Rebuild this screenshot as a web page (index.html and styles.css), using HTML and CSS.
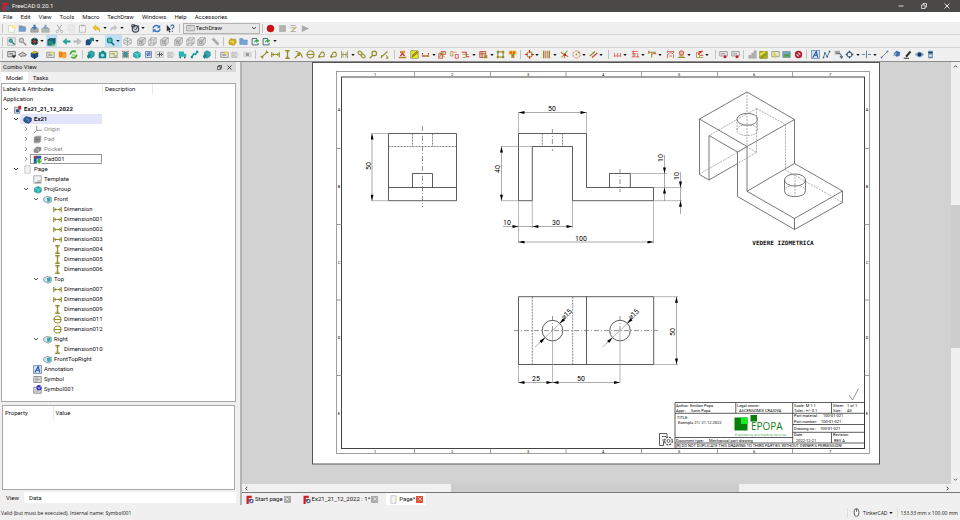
FILE: index.html
```html
<!DOCTYPE html>
<html lang="en">
<head>
  <meta charset="UTF-8">
  <meta name="viewport" content="width=device-width, initial-scale=1.0">
  <title>FreeCAD 0.20.1</title>
  <link rel="stylesheet" href="styles.css">
</head>
<body>
  <!-- Icon sprite, every icon is on a 12x12 grid -->
  <svg class="sprite" aria-hidden="true">
    <symbol id="logo" viewBox="0 0 12 12"><path d="M2 1h7v3H5v2h3v2H5v4H2z" fill="#d01f27"/><circle cx="8.500" cy="8" r="2.300" fill="none" stroke="#3d5f9c" stroke-width="1.600"/></symbol>
    <symbol id="new" viewBox="0 0 12 12"><path d="M2 2h8v9H2z" fill="#fbfbf5" stroke="#c9c9bd" stroke-width=".8"/><circle cx="8.500" cy="3.500" r="2.500" fill="#fdf07a"/></symbol>
    <symbol id="open" viewBox="0 0 12 12"><path d="M1 2h4l1 1h4v7H1z" fill="#8a8f98"/><path d="M2 5h9l-1 5H1z" fill="#6da0d8"/></symbol>
    <symbol id="save" viewBox="0 0 12 12"><path d="M1 6h10v5H1z" fill="#a9a9a5" stroke="#777" stroke-width=".6"/><path d="M4.500 1h3v3H10L6 8 2 4h2.500z" fill="#3f78c3"/></symbol>
    <symbol id="saveas" viewBox="0 0 12 12"><path d="M1 6h10v5H1z" fill="#b9b9b6" stroke="#888" stroke-width=".6"/><path d="M4.500 1h3v3H10L6 8 2 4h2.500z" fill="#8aa6c8"/></symbol>
    <symbol id="cut" viewBox="0 0 12 12"><path d="M3 1l5 8M9 1L4 9" stroke="#aaa" stroke-width="1.300"/><g fill="none" stroke="#aaa"><circle cx="3" cy="10" r="1.500"/><circle cx="9" cy="10" r="1.500"/></g></symbol>
    <symbol id="copy" viewBox="0 0 12 12"><path d="M2 1h6v7H2zM4 3h6v8H4z" fill="#eee" stroke="#ddd"/></symbol>
    <symbol id="paste" viewBox="0 0 12 12"><path d="M2 2h8v9H2z" fill="#f2f2f2" stroke="#b0b0b0"/><path d="M4 1h4v2H4z" fill="#aaa"/></symbol>
    <symbol id="undo" viewBox="0 0 12 12"><path d="M1 5l4-4v2.500c4 0 6 2 5 7-1-3-2-3.500-5-3.500v2z" fill="#e8c520" stroke="#c8a30f" stroke-width=".5"/></symbol>
    <symbol id="redo" viewBox="0 0 12 12"><path d="M11 5L7 1v2.500c-4 0-6 2-5 7 1-3 2-3.500 5-3.500v2z" fill="#c4c4c4"/></symbol>
    <symbol id="nodes" viewBox="0 0 12 12"><circle cx="6" cy="6.500" r="4.300" fill="#cfd6de" stroke="#34404d" stroke-width="1.500"/><path d="M1 1h4v3H1zM4 6l2 2 4-6" fill="none" stroke="#34404d" stroke-width="1.300"/></symbol>
    <symbol id="sync" viewBox="0 0 12 12"><g fill="none" stroke="#3b78c3" stroke-width="1.900"><path d="M1.500 6c0-4 5-5 7.500-2.500M10.500 6.500c0 4-5 4.500-7.500 2"/></g><path d="M11 1v4.500H6.500zM1 11.500V7h4.500z" fill="#3b78c3"/></symbol>
    <symbol id="whats" viewBox="0 0 12 12"><path d="M1 1v9l2-2 1.500 3.500 1.500-1L4.500 7.500H7z" fill="#333"/><path d="M6.500 3.500c0-3 4-3 4-.5 0 2-2 2-2 4M8.500 9v1.500" fill="none" stroke="#3b6ea8" stroke-width="1.500"/></symbol>
    <symbol id="record" viewBox="0 0 12 12"><circle cx="6" cy="6" r="4.700" fill="#cf1010" stroke="#940808" stroke-width=".5"/></symbol>
    <symbol id="stop" viewBox="0 0 12 12"><path d="M1.500 1.500h9v9h-9z" fill="#b1b1b1"/></symbol>
    <symbol id="macro" viewBox="0 0 12 12"><path d="M2 2h7M2 5h7M2 10h7" stroke="#999"/><path d="M4 9l6-5" stroke="#c9b37d" stroke-width="1.800"/></symbol>
    <symbol id="play" viewBox="0 0 12 12"><path d="M1 1.500L11 6 1 10.500z" fill="#aaa"/></symbol>
    <symbol id="page" viewBox="0 0 12 12"><path d="M2.500 1h7v10h-7z" fill="#f4f4f2" stroke="#aaa" stroke-width=".8"/></symbol>

    <symbol id="fit" viewBox="0 0 12 12"><path d="M1 1h10v10H1z" fill="#e4eeee" stroke="#888" stroke-width=".7"/><circle cx="5" cy="5" r="2.300" fill="#43b3b0" stroke="#146a70"/><path d="M7 7l3 3" stroke="#146a70" stroke-width="1.500"/></symbol>
    <symbol id="zoomgray" viewBox="0 0 12 12"><circle cx="4.500" cy="4.500" r="3" fill="#c8c8c8" stroke="#8a8a8a" stroke-width="1.200"/><path d="M7 7l4 4" stroke="#8a8a8a" stroke-width="1.800"/></symbol>
    <symbol id="style" viewBox="0 0 12 12"><circle cx="6" cy="6" r="4.500" fill="#2b302f" stroke="#20706a"/><circle cx="6" cy="6" r="2" fill="#c83434"/><path d="M6 1v2M6 9v2M1 6h2M9 6h2" stroke="#4ac4b8"/></symbol>
    <symbol id="box" viewBox="0 0 12 12"><path d="M1 4l2-2h8v6l-2 3H1z" fill="#1d8c82" stroke="#115" stroke-width=".6"/><path d="M1 4h8v7M9 4l2-2" fill="none" stroke="#0b3d50"/><path d="M7 12V8l4 3z" fill="#67d957"/></symbol>
    <symbol id="left" viewBox="0 0 12 12"><path d="M1 6l5-4v3h5v2H6v3z" fill="#16a79e" stroke="#0d7d78" stroke-width=".5"/></symbol>
    <symbol id="right" viewBox="0 0 12 12"><path d="M11 6L6 2v3H1v2h5v3z" fill="#c4c4c4" stroke="#8e8e8e" stroke-width=".5"/></symbol>
    <symbol id="link" viewBox="0 0 12 12"><path d="M1 5l2-2h5v6l-2 2H1z" fill="#1e4f86"/><path d="M6 1h6v5l-2-1-2 3-2-2 2-2z" fill="#22838b"/></symbol>
    <symbol id="zoom" viewBox="0 0 12 12"><circle cx="5" cy="4.500" r="3.200" fill="#55bdb9" stroke="#0b8583" stroke-width="1.500"/><path d="M7 7l4 4" stroke="#0b6f74" stroke-width="2.200"/></symbol>
    <symbol id="iso" viewBox="0 0 12 12"><path d="M6 1l5 2.500v5L6 11 1 8.500v-5zM1 3.500L6 6l5-2.500M6 6v5M6 1v5L1 8.500M6 6l5 2.500" fill="none" stroke="#8f9696" stroke-width=".9"/></symbol>
    <symbol id="cube" viewBox="0 0 12 12"><path d="M1 4l3-3h7v7l-3 3H1z" fill="#e8e8e8" stroke="#909090"/><path d="M1 4h7v7M8 4l3-3M3 6h3v3H3z" fill="#ccc" stroke="#909090"/></symbol>
    <symbol id="cube2" viewBox="0 0 12 12"><path d="M1 4l3-3h7v7l-3 3H1zM1 4h7v7M8 4l3-3M4 1v7h7M1 11l3-3" fill="#e8e8e8" stroke="#959595" stroke-width=".9"/></symbol>
    <symbol id="measure" viewBox="0 0 12 12"><path d="M2 2l8 8" stroke="#999" stroke-width="3.400"/><path d="M2 2l8 8" stroke="#ddd" stroke-width="1.800" stroke-dasharray="1 1"/></symbol>
    <symbol id="part" viewBox="0 0 12 12"><path d="M1 6l3-4 3 1 3 0 1 4-3 4-6-1z" fill="#d4b41a" stroke="#96800c" stroke-width=".7"/><path d="M3 6h4v3" fill="none" stroke="#fff08a"/></symbol>
    <symbol id="folder" viewBox="0 0 12 12"><path d="M1 2h4l1 2h5v6H1z" fill="#78a4d6" stroke="#5079ac" stroke-width=".6"/></symbol>
    <symbol id="export" viewBox="0 0 12 12"><path d="M8 2H1.500v8.500h8V8" fill="#eef3f7" stroke="#34506c" stroke-width="1.100"/><path d="M4 8c0-3 1-4 3-4V2l4 3-4 3V6C6 6 5 6 4 8z" fill="#38a342"/></symbol>

    <symbol id="sheet" viewBox="0 0 12 12"><path d="M1 2h10v7H1z" fill="#ebebeb" stroke="#8b8b8b"/><path d="M3 4h6M3 6h3M6 8h4" stroke="#a5a5a5"/></symbol>
    <symbol id="insert" viewBox="0 0 12 12"><path d="M1 2h10v7H1z" fill="#ddd" stroke="#555"/><path d="M6 7h6l-3 4z" fill="#333"/><path d="M3 4h5v2H3z" fill="#888"/></symbol>
    <symbol id="clip" viewBox="0 0 12 12"><path d="M1 6l5-3 5 3-1 2H6L4 9z" fill="#c8c8c4" stroke="#555"/></symbol>
    <symbol id="solid" viewBox="0 0 12 12"><path d="M1 4l5-3 5 2v6l-5 3-5-3z" fill="#1c4e88"/><path d="M1 4l5-3 5 2-5 2z" fill="#d9b429"/><path d="M6 5v7" stroke="#0c2b52"/></symbol>
    <symbol id="pagenew" viewBox="0 0 12 12"><path d="M1 3h10v7H1z" fill="#ddd" stroke="#888"/><path d="M3 5h5v3H3z" fill="#aaa"/><circle cx="8.500" cy="4" r="2" fill="#f2e33f"/></symbol>
    <symbol id="orange" viewBox="0 0 12 12"><path d="M1 2h4l1 1h5v7H1z" fill="#ee8512"/><path d="M6 5h5v6H6z" fill="#f9a541"/></symbol>
    <symbol id="redraw" viewBox="0 0 12 12"><path d="M2 6a4 4 0 017-3M10 6a4 4 0 01-7 3" fill="none" stroke="#4eac31" stroke-width="2.500"/><path d="M4 5h4v3H4z" fill="#b6d7a5"/></symbol>
    <symbol id="view" viewBox="0 0 12 12"><path d="M3 3l4-2 4 2v5l-4 3-4-2z" fill="#2da9ac" stroke="#14676c" stroke-width=".6"/><path d="M1 8l4-3 2 3-4 4z" fill="#1b8388"/></symbol>
    <symbol id="camera" viewBox="0 0 12 12"><path d="M1 3h3l1-2h3l1 2h2v8H1z" fill="#15878a"/><circle cx="6" cy="7" r="2.300" fill="#8ee0de"/></symbol>
    <symbol id="draft" viewBox="0 0 12 12"><path d="M1 2h10v8H1z" fill="#eeeecb" stroke="#858570"/><path d="M3 4h5v2H3z" fill="#b1ad62"/><path d="M6 8h4" stroke="#666"/></symbol>
    <symbol id="section" viewBox="0 0 12 12"><path d="M3 2h6v8H3z" fill="#279fa4"/><path d="M2 1v10M10 1v10M4 1v10M8 1v10" stroke="#b34b4b" stroke-dasharray="2 1"/></symbol>
    <symbol id="group" viewBox="0 0 12 12"><path d="M2 4l5-2 4 2v5l-4 2-5-2z" fill="#28b4b5" stroke="#14777b" stroke-width=".7"/><path d="M2 4l5 2 4-2M7 6v5" fill="none" stroke="#a4e4e4" stroke-width=".8"/></symbol>
    <symbol id="sheetblue" viewBox="0 0 12 12"><path d="M2 2h8v8H2z" fill="#dce4ef" stroke="#51709f"/><path d="M4 8l4-5M4 4h4v3H4z" fill="none" stroke="#2e5494"/></symbol>
    <symbol id="move" viewBox="0 0 12 12"><path d="M1 2h10v8H1z" fill="#e5e5e5" stroke="#aaa" stroke-width=".7"/><path d="M6 3v6M3 6h6M8 4l2 2-2 2" fill="none" stroke="#333"/></symbol>
    <symbol id="share" viewBox="0 0 12 12"><path d="M1 3h7v7H1z" fill="#ccc" stroke="#bbb"/><path d="M6 5h5v3H6z" fill="#ddd"/></symbol>
    <symbol id="truck" viewBox="0 0 12 12"><path d="M1 2h7v7H1zM8 5h3v4H8z" fill="#2bb2b5"/><path d="M2 9h2v2H2zM8 9h2v2H8z" fill="#17686b"/></symbol>
    <symbol id="detail" viewBox="0 0 12 12"><path d="M2 10l3-5 2 1 3-4" fill="none" stroke="#1d9da0" stroke-width="2"/><path d="M1 8h3v3H1zM8 1h3v3H8z" fill="#1d8f92"/></symbol>
    <symbol id="graydot" viewBox="0 0 12 12"><path d="M1 3h10v6H1z" fill="#ddd" stroke="#ccc"/><path d="M4 4h4v4H4z" fill="#999"/></symbol>

    <symbol id="d-len" viewBox="0 0 12 12"><path d="M2.500 9.500l7-7M1 8l3 3M8 1l3 3" stroke="#8f8a2b" stroke-width="1.600"/></symbol>
    <symbol id="d-h" viewBox="0 0 12 12"><path d="M1 2.500v7M11 2.500v7M1 6h10" stroke="#938d2c" stroke-width="1.600"/><path d="M1.500 6L4 4v4zM10.500 6L8 4v4z" fill="#938d2c"/></symbol>
    <symbol id="d-v" viewBox="0 0 12 12"><path d="M3 1h6M3 11h6M6 1v10" stroke="#938d2c" stroke-width="1.700"/><path d="M6 2L4.500 4h3zM6 10L4.500 8h3z" fill="#938d2c"/></symbol>
    <symbol id="d-rad" viewBox="0 0 12 12"><path d="M2 2c5 0 8 3 9 8M1 11l6-6M4 5h3v3" fill="none" stroke="#938d2c" stroke-width="1.500"/></symbol>
    <symbol id="d-dia" viewBox="0 0 12 12"><circle cx="6" cy="6" r="4.600" fill="none" stroke="#938d2c" stroke-width="1.500"/><path d="M1 6h10" stroke="#938d2c" stroke-width="1.500"/></symbol>
    <symbol id="d-ang" viewBox="0 0 12 12"><path d="M2 9l4-6c3-1 5 2 3 6M2 9h7" fill="none" stroke="#938d2c" stroke-width="1.500"/><circle cx="3" cy="9" r="1.500" fill="#938d2c"/></symbol>
    <symbol id="d-ext" viewBox="0 0 12 12"><path d="M2 1v10M10 1v10M4 3v7M8 3v7M2 6h8" stroke="#9b965e" stroke-width="1.100"/></symbol>
    <symbol id="d-link" viewBox="0 0 12 12"><g fill="none" stroke="#938d2c" stroke-width="1.500"><ellipse cx="4" cy="4" rx="3" ry="2" transform="rotate(45 4 4)"/><ellipse cx="8" cy="8" rx="3" ry="2" transform="rotate(45 8 8)"/></g></symbol>
    <symbol id="d-bal" viewBox="0 0 12 12"><circle cx="7" cy="4.500" r="3" fill="none" stroke="#938d2c" stroke-width="1.600"/><path d="M5 7l-4 4" stroke="#938d2c" stroke-width="1.600"/></symbol>
    <symbol id="d-axo" viewBox="0 0 12 12"><path d="M1 10l9-8M2 7v4M8 7l3 4M8 11h3" stroke="#938d2c" stroke-width="1.400"/></symbol>

    <symbol id="c-cap" viewBox="0 0 12 12"><path d="M1 9h10v2H1z" fill="#b3842b"/><path d="M3 2l6 6M9 2L3 8" stroke="#d63a2a" stroke-width="1.800"/><path d="M4 1h5v3H4z" fill="#d8993c"/></symbol>
    <symbol id="c-edit" viewBox="0 0 12 12"><path d="M1 1h10v10H1z" fill="#f1ee14" stroke="#555" stroke-width=".7"/><path d="M3 9l1-3 5-4 1 2-5 4z" fill="#d7a01d" stroke="#333" stroke-width=".7"/></symbol>
    <symbol id="c-hor" viewBox="0 0 12 12"><path d="M1 8h10M2 4v2M10 4v2" stroke="#df2020" stroke-width="1.500"/><path d="M2 8h3M7 8h3" stroke="#938d2c" stroke-width="2"/></symbol>
    <symbol id="c-mix" viewBox="0 0 12 12"><path d="M1 5h5v6H1zM4 2h6v4H4z" fill="#ded7ae" stroke="#d64545"/><path d="M2 3l7 7M8 2l-6 7" stroke="#778421"/></symbol>
    <symbol id="c-pair" viewBox="0 0 12 12"><path d="M1 2h3v6H1z" fill="none" stroke="#9a8d2c"/><path d="M7 6h4v5H7z" fill="none" stroke="#dc3030"/><path d="M5 2h4v2H5z" fill="#e6b5b5"/></symbol>
    <symbol id="c-step" viewBox="0 0 12 12"><path d="M1 3h6v6h4" fill="none" stroke="#e03030" stroke-width="1.400"/><path d="M2 6h8M2 10h4" stroke="#938d2c"/></symbol>
    <symbol id="c-hatch" viewBox="0 0 12 12"><path d="M1 2h8v8H1zM1 5h8M4 2v8" fill="#e0ceaa" stroke="#b5453a"/><path d="M7 7h4v4H7z" fill="#938d2c"/></symbol>
    <symbol id="c-rect" viewBox="0 0 12 12"><path d="M2.500 2.500h7v7h-7z" fill="none" stroke="#857f1b" stroke-width="1.300"/><path d="M1 1h3v3H1zM8 1h3v3H8zM1 8h3v3H1zM8 8h3v3H8z" fill="#938d2c"/></symbol>
    <symbol id="c-brush" viewBox="0 0 12 12"><path d="M1 1h10v5H1z" fill="#eab71d"/><path d="M3 2h2v3H3zM7 2h2v3H7z" fill="#e2402a"/><path d="M5 6h3v3H5zM4 10h5" fill="#9c8324" stroke="#9c8324"/></symbol>
    <symbol id="x-cross" viewBox="0 0 12 12"><circle cx="6" cy="6" r="3.600" fill="none" stroke="#938d2c" stroke-width="1.400"/><path d="M6 0v4M6 8v4M0 6h4M8 6h4" stroke="#e02020" stroke-width="1.200"/></symbol>
    <symbol id="x-thread" viewBox="0 0 12 12"><path d="M2 1h8v10H2z" fill="#d5c9a8"/><path d="M2 1v10M10 1v10" stroke="#938d2c" stroke-width="1.500"/><path d="M4.500 1v10M7.500 1v10" stroke="#df6a6a"/></symbol>
    <symbol id="x-star" viewBox="0 0 12 12"><path d="M1 3l10 6M2 10l8-9" stroke="#938d2c" stroke-width="1.400"/><path d="M5 5h3v3H5z" fill="#e02020"/><path d="M6 6v5" stroke="#d33"/></symbol>
    <symbol id="x-circ" viewBox="0 0 12 12"><circle cx="6" cy="6" r="4.800" fill="none" stroke="#d9624e" stroke-dasharray="4 1"/><path d="M5 5h2v2H5z" fill="#9c8f1c"/><path d="M8 2h2v2H8z" fill="#938d2c"/></symbol>
    <symbol id="x-par" viewBox="0 0 12 12"><path d="M1 8l7-6" stroke="#938d2c" stroke-width="1.600"/><path d="M4 10l7-6" stroke="#dd3939" stroke-width="1.600"/></symbol>
    <symbol id="x-chain" viewBox="0 0 12 12"><path d="M1 8h10M2 4v5M6 4v5M10 4v5" stroke="#d95050" stroke-width="1"/></symbol>
    <symbol id="x-coord" viewBox="0 0 12 12"><path d="M1 2h8M1 5h6M1 9h10M3 1v9M9 4v6" fill="none" stroke="#de4848"/><path d="M5 4v4" stroke="#938d2c"/></symbol>
    <symbol id="x-chamf" viewBox="0 0 12 12"><path d="M1 3h9M5 3v7M5 6l5-3" stroke="#938d2c" stroke-width="1.300"/><path d="M1 1v4M8 5h3" stroke="#e03030" stroke-width="1.200"/></symbol>
    <symbol id="x-arc" viewBox="0 0 12 12"><path d="M2 11V6l3-2h3l2 2v5M1 2h10M4 8h4" fill="none" stroke="#dc4545"/><path d="M2 1v3M10 1v3" stroke="#938d2c"/></symbol>
    <symbol id="x-pos" viewBox="0 0 12 12"><circle cx="6" cy="4" r="3" fill="#dfb7a1" stroke="#ce3030"/><path d="M1 10h10M3 8h6" stroke="#938d2c" stroke-width="1.500"/></symbol>
    <symbol id="x-inc" viewBox="0 0 12 12"><path d="M2 3h4v7H2zM6 10h5" fill="none" stroke="#938d2c"/><path d="M4 6l6-5M5 2h5M7 7h4" stroke="#e02c2c" stroke-width="1.500"/></symbol>

    <symbol id="s-rec" viewBox="0 0 12 12"><path d="M1 2h10v6H1z" fill="#e6e6e6" stroke="#888"/><path d="M3 4h5v2H3z" fill="#aaa"/><circle cx="8" cy="9" r="2" fill="#c41e32"/></symbol>
    <symbol id="s-stair" viewBox="0 0 12 12"><path d="M1 11V7h4V4h3V1h3v10z" fill="#b0b0b0" stroke="#999" stroke-width=".5"/></symbol>
    <symbol id="s-map" viewBox="0 0 12 12"><path d="M1 2h10v9H1z" fill="#c6b91b" stroke="#6d831a"/><path d="M1 10l9-8v5l-6 4z" fill="#8e9c1b"/><path d="M6 2h4L1 8V5z" fill="#f0e14c"/></symbol>
    <symbol id="s-sym" viewBox="0 0 12 12"><path d="M1 2h10v7H1z" fill="#e3e8ce" stroke="#878b74"/><path d="M5 1l-2 6h2v5l3-6H6z" fill="#e2cd28"/></symbol>
    <symbol id="s-img" viewBox="0 0 12 12"><path d="M1 2h10v8H1z" fill="#6fa8d4" stroke="#888"/><path d="M2 7l3-2 2 1 3-2v5H2z" fill="#53a13b"/></symbol>
    <symbol id="s-no" viewBox="0 0 12 12"><circle cx="6" cy="6" r="3.800" fill="#ddd" stroke="#b01e32" stroke-width="2.200"/><path d="M3 3l6 6" stroke="#b01e32" stroke-width="1.700"/></symbol>
    <symbol id="annot" viewBox="0 0 12 12"><path d="M.5.5h11v11H.5z" fill="#cfdff2" stroke="#5179af"/><path d="M2.500 10L7 2l2 8M4 7h4" fill="none" stroke="#28558f" stroke-width="1.400"/></symbol>
    <symbol id="a-poly" viewBox="0 0 12 12"><path d="M2 10l2-6 3 5 3-7" fill="none" stroke="#5b7694" stroke-width="1.200"/><path d="M1 9h2v2H1zM3 3h2v2H3zM6 8h2v2H6zM9 1h2v2H9z" fill="#31517a"/></symbol>
    <symbol id="a-rich" viewBox="0 0 12 12"><path d="M1 1h7v5H1z" fill="#aaa9a2"/><path d="M3 4c5 0 7 1 7 6M8 8l2 3 2-3" fill="none" stroke="#586f82" stroke-width="1.400"/></symbol>
    <symbol id="a-cent" viewBox="0 0 12 12"><circle cx="6" cy="6" r="3.200" fill="none" stroke="#5c6f80" stroke-width="1.500"/><path d="M6 1v2M6 9v2M1 6h2M9 6h2" stroke="#344b63" stroke-width="1.700"/></symbol>
    <symbol id="a-line" viewBox="0 0 12 12"><path d="M6 1v10M0 6h4M8 6h4" stroke="#68809a" stroke-width="1.400"/></symbol>
    <symbol id="a-seg" viewBox="0 0 12 12"><path d="M2 10l8-8" stroke="#8b7970" stroke-width="1.200"/><path d="M1 9h2v2H1zM9 1h2v2H9z" fill="#3e6696"/></symbol>
    <symbol id="a-weld" viewBox="0 0 12 12"><path d="M2 5l4-4 5 2-1 5-4 1z" fill="#3f6ea8"/><path d="M2 8l4-4" stroke="#8db0da" stroke-width="1.500"/></symbol>
    <symbol id="a-pen" viewBox="0 0 12 12"><path d="M3 8l6-7 2 2-6 7z" fill="#333"/><path d="M1 11h7" stroke="#222" stroke-width="1.200"/></symbol>
    <symbol id="a-eye" viewBox="0 0 12 12"><path d="M0 6c3-5 9-5 12 0-3 5-9 5-12 0z" fill="#8fa9c9"/><circle cx="6" cy="6" r="2.600" fill="#163564"/></symbol>
    <symbol id="a-can" viewBox="0 0 12 12"><path d="M3 1h6v10H3z" fill="#5c86b5"/><path d="M3 3.500h6" stroke="#203a58" stroke-width="1.500"/><path d="M4 6h4v3H4z" fill="#c5d8ec"/></symbol>

    <symbol id="doc" viewBox="0 0 12 12"><path d="M2 3h7v8H2z" fill="#d7dce6" stroke="#677794"/><path d="M7 1h4v5H7z" fill="#d02630"/><circle cx="6" cy="7.500" r="2.300" fill="#2f568f"/></symbol>
    <symbol id="body" viewBox="0 0 12 12"><path d="M1 5l3-3 3 1 4 1v4l-3 3-5-1-2-2z" fill="#2e5d9b" stroke="#122e55" stroke-width=".8"/><path d="M4 5l3 1v3" fill="none" stroke="#86a8d2"/></symbol>
    <symbol id="origin" viewBox="0 0 12 12"><path d="M5 1v6l-4 4M5 7h7" fill="none" stroke="#888" stroke-width="1.200"/></symbol>
    <symbol id="pad" viewBox="0 0 12 12"><path d="M1 3l3-2h7v7l-3 3H1z" fill="#a2a2a2"/><path d="M2 4h7M2 6h7M2 8h7" stroke="#666"/></symbol>
    <symbol id="pocket" viewBox="0 0 12 12"><path d="M1 6l4-4 6 1v4l-5 4-5-1z" fill="#8c8c8c"/><path d="M4 5l3 1v3" fill="none" stroke="#ccc"/></symbol>
    <symbol id="padtip" viewBox="0 0 12 12"><path d="M1 3l3-2h7v7l-3 3H1z" fill="#2b5c9c"/><path d="M1 1h3v3H1z" fill="#c33"/><path d="M5 5h6v7H5z" fill="#f0fff0"/><path d="M6 5h4v3h2l-4 4-3-4h1z" fill="#43b340"/></symbol>
    <symbol id="template" viewBox="0 0 12 12"><path d="M1 1h10v10H1z" fill="#eef1f3" stroke="#999"/><path d="M6 8h4M3 10h7" stroke="#777"/></symbol>
    <symbol id="projview" viewBox="0 0 12 12"><path d="M1 4l4-2 6 1v6l-4 2-6-3z" fill="#dceaea" stroke="#667" stroke-width=".8"/><path d="M5 4l5-1v5l-4 2z" fill="#31acb0"/></symbol>
    <symbol id="symbol" viewBox="0 0 12 12"><path d="M1 2h10v8H1z" fill="#ddd" stroke="#777"/><path d="M3 4h4M3 6h6M3 8h3" stroke="#888"/></symbol>
    <symbol id="symtip" viewBox="0 0 12 12"><path d="M1 3h10v8H1z" fill="#ddd" stroke="#777"/><circle cx="8" cy="3.500" r="3.500" fill="#2b33c6"/><path d="M6.500 3l1.500 2 2-3" fill="none" stroke="#fff"/><path d="M3 8h5" stroke="#888"/></symbol>
    <symbol id="mouse" viewBox="0 0 12 12"><rect x="3" y="1" width="6" height="10" rx="3" fill="#fff" stroke="#333"/><path d="M6 1v4" stroke="#333"/></symbol>
    <symbol id="arrow" viewBox="0 0 12 12"><path d="M1 3h10L6 9z" fill="#111"/></symbol>
    <symbol id="chev-down" viewBox="0 0 12 12"><path d="M2 4l4 4 4-4" fill="none" stroke="#333" stroke-width="1.700"/></symbol>
    <symbol id="chev-right" viewBox="0 0 12 12"><path d="M4 2l4 4-4 4" fill="none" stroke="#777" stroke-width="1.600"/></symbol>
    <symbol id="chev-left" viewBox="0 0 12 12"><path d="M8 2L4 6l4 4" fill="none" stroke="#222" stroke-width="2"/></symbol>
    <symbol id="chev-up" viewBox="0 0 12 12"><path d="M2 8l4-4 4 4" fill="none" stroke="#222" stroke-width="2"/></symbol>
    <symbol id="minimize" viewBox="0 0 12 12"><path d="M1 6h10" stroke="currentColor" stroke-width="1.600"/></symbol>
    <symbol id="restore" viewBox="0 0 12 12"><path d="M1 4h7v7H1zM4 4V1h7v7H8" fill="none" stroke="currentColor" stroke-width="1.500"/></symbol>
    <symbol id="close" viewBox="0 0 12 12"><path d="M1 1l10 10M11 1L1 11" stroke="currentColor" stroke-width="1.800"/></symbol>
  </svg>

  <header class="titlebar">
    <svg class="icon"><use href="#logo"/></svg>
    <h1>FreeCAD 0.20.1</h1>
    <div class="window-buttons">
      <button aria-label="Minimize"><svg><use href="#minimize"/></svg></button>
      <button aria-label="Restore"><svg><use href="#restore"/></svg></button>
      <button aria-label="Close"><svg><use href="#close"/></svg></button>
    </div>
  </header>

  <nav class="menubar">
    <a href="#">File</a>
    <a href="#">Edit</a>
    <a href="#">View</a>
    <a href="#">Tools</a>
    <a href="#">Macro</a>
    <a href="#">TechDraw</a>
    <a href="#">Windows</a>
    <a href="#">Help</a>
    <a href="#">Accessories</a>
  </nav>

  <div class="toolbars">
    <div class="toolbar" id="toolbar-file"></div>
    <div class="toolbar" id="toolbar-view"></div>
    <div class="toolbar" id="toolbar-techdraw"></div>
  </div>

  <template id="workbench">
    <div class="workbench">
      <svg class="icon"><use href="#sheet"/></svg>
      <select aria-label="Workbench"><option>TechDraw</option></select>
      <svg class="chevron"><use href="#chev-down"/></svg>
    </div>
  </template>

  <div class="workspace">
    <!-- Combo view -->
    <aside class="dock">
      <div class="dock-title">
        <h2>Combo View</h2>
        <button aria-label="Float"><svg><use href="#restore"/></svg></button>
        <button aria-label="Close panel"><svg><use href="#close"/></svg></button>
      </div>
      <div class="tabs">
        <button class="tab active">Model</button>
        <button class="tab">Tasks</button>
      </div>
      <div class="tree">
        <div class="tree-header"><span>Labels &amp; Attributes</span><span>Description</span></div>
        <p class="tree-root">Application</p>
        <ul id="tree"></ul>
      </div>
      <div class="properties">
        <table>
          <thead><tr><th>Property</th><th>Value</th></tr></thead>
        </table>
      </div>
      <div class="tabs bottom">
        <button class="tab">View</button>
        <button class="tab active">Data</button>
      </div>
    </aside>

    <!-- Drawing page -->
    <main class="mdi">
      <div class="viewport">
        <svg class="drawing" viewBox="242 62 709 422" preserveAspectRatio="xMidYMin meet">
          <defs>
            <marker id="tip" viewBox="0 0 8 4" refX="8" refY="2" markerWidth="7" markerHeight="3" markerUnits="userSpaceOnUse" orient="auto-start-reverse"><path d="M0 0l8 2-8 2z"/></marker>
          </defs>
          <rect class="paper" x="312.500" y="62.500" width="567" height="401.500"/>
          <rect class="frame-outer" x="336.500" y="71.500" width="533" height="382"/>
          <rect class="frame" x="341.500" y="77" width="523" height="371.500"/>
          <g id="zones"></g>

          <!-- Right view -->
          <g class="edge">
            <path d="M388.500 133.500h68v67.200h-68zM388.500 187.500h68M412.500 187.500v-14h20v14"/>
          </g>
          <path class="hidden-edge" d="M388.500 146.500h68M412.500 133.500v13M432.500 133.500v13"/>
          <path class="center" d="M422.500 126v81"/>
          <path class="ext" d="M371 133.500h17M371 200.700h17"/>
          <path class="dim both" d="M372 133.500v67.200"/>
          <text class="value" transform="translate(371 166) rotate(-90)">50</text>

          <!-- Front view -->
          <path class="edge" d="M518.500 133.500h68v54h67v13.200h-81v-54.200h-40.200v54.200h-13.800zM609.500 187.500v-14h20.800v14"/>
          <path class="hidden-edge" d="M542.300 133.500v13M562.500 133.500v13"/>
          <path class="center" d="M552.400 129v22M620 169v23"/>
          <path class="ext" d="M518.500 133V112M586.500 133V112M501 146.500h31M501 200.700h17M518.500 201v42M532.300 201v27M572.500 201v27M653.500 201v42M630 173.500h37M654 187.500h28M654 200.700h28"/>
          <path class="dim both" d="M518.500 112.500h68"/>
          <path class="dim both" d="M501.500 146.500v54.200"/>
          <path class="dim both" d="M532.300 226.500h40.200"/>
          <path class="dim end" d="M503 226.500h15.500"/>
          <path class="dim" d="M518 226.500h15"/>
          <path class="dim both" d="M518.500 242h135"/>
          <path class="dim end" d="M664.500 155v18.500"/>
          <path class="dim start" d="M664.500 187.500v13.500"/>
          <path class="dim" d="M664.500 173v15M680.500 187v14"/>
          <path class="dim end" d="M680.500 172v15.500"/>
          <path class="dim start" d="M680.500 200.700V214"/>
          <text class="value" x="552" y="111">50</text>
          <text class="value" transform="translate(500 169) rotate(-90)">40</text>
          <text class="value" x="507" y="225">10</text>
          <text class="value" x="556" y="225">30</text>
          <text class="value" x="581" y="241">100</text>
          <text class="value" transform="translate(663 158) rotate(-90)">10</text>
          <text class="value" transform="translate(679 176) rotate(-90)">10</text>

          <!-- Top view -->
          <path class="edge" d="M518.500 296.700h135.200v67.800H518.500zM586.500 296.700v67.800"/>
          <path class="hidden-edge" d="M532.300 296.700v67.800M572.700 296.700v67.800"/>
          <circle class="edge" cx="552.500" cy="330.600" r="10.300"/>
          <circle class="edge" cx="620" cy="330.600" r="10.300"/>
          <path class="center" d="M514 330.600h144M552.500 316v15M620 316v15"/>
          <path class="ext" d="M518.500 365v18M552.500 331v52M620 331v52M654 296.700h24M654 364.500h24M535 347l37-35M602.500 347l37-35"/>
          <path class="dim both" d="M518.500 382.500h34"/>
          <path class="dim both" d="M552.500 382.500H620"/>
          <path class="dim both" d="M676.500 296.700v67.800"/>
          <path class="dim end" d="M539 343.500l6-5.800"/>
          <path class="dim end" d="M565 318.500l-5.500 5"/>
          <path class="dim end" d="M606.500 343.500l6-5.800"/>
          <path class="dim end" d="M632.500 318.500l-5.500 5"/>
          <text class="value" x="536" y="381">25</text>
          <text class="value" x="581" y="381">50</text>
          <text class="value" transform="translate(675 332) rotate(-90)">50</text>
          <text class="value" transform="translate(568 316) rotate(-45)">⌀15</text>
          <text class="value" transform="translate(635 316) rotate(-45)">⌀15</text>

          <!-- Isometric view -->
          <path class="thin" d="M747 92l47.500 27.500L747 146.500l-47.500-27.500zM699.500 119v55.500l9.500 5.500v-44.500l28.500 16.500v44.500l57 33 48-27V191l-48-27.500L747 191.300l47.500 27.200 48-27.500M747 146.500v44.800M794.500 218.500v11M794.500 119.500v44M709 180l28.500-16.500M737.500 152l9.500-5.500"/>
          <ellipse class="thin" cx="747.300" cy="119.300" rx="10.300" ry="6"/>
          <ellipse class="thin" cx="795" cy="180" rx="10.500" ry="6"/>
          <path class="thin" d="M784.500 180v11c0 7.500 21 7.500 21 0v-11"/>
          <path class="iso-hidden" d="M747 92v54M756.500 108.500l29 16V170l57 32.500M756.500 108.500L709 135.500M756.500 108.500v44M699.500 174l47.500-27 9.500 5.500-19 11M737 119v11c0 7.500 20.500 7.500 20.500 0v-11M737 130c0-7 20.500-7 20.500 0M784.500 191c0-7.500 21-7.500 21 0M795 174v23"/>
          <text class="caption" x="783" y="245">VEDERE IZOMETRICA</text>

          <!-- Title block -->
          <path class="block" d="M675 402.500h189.500v46H675zM675 413.300h189.500M735.800 402.500v10.800M792.700 402.500V443M675 437.500h117.700M675 443h189.500M831.500 402.500v10.800M792.700 424.500h71.800M792.700 432.300h71.800M831.500 432.300V443"/>
          <g class="note">
            <text x="676" y="407">Author: Emilian Popa</text>
            <text x="676" y="412">Appr.:</text><text x="691" y="412">Sorin Popa</text>
            <text x="737" y="407">Legal owner:</text>
            <text x="739" y="412">ASCENSOMIX CRAIOVA</text>
            <text x="677" y="419">TITLE:</text>
            <text x="678" y="424">Exemplu 21/ 21.12.2022</text>
            <text x="676" y="442">Document type:</text><text x="709" y="442">Mechanical part drawing</text>
            <text x="676" y="447">[R] DO NOT DUPLICATE THIS DRAWING TO THIRD PARTIES WITHOUT OWNER'S PERMISSION!</text>
            <text x="794" y="407">Scale: M 1:1</text>
            <text x="794" y="412">Toler.: +/- 0.1</text>
            <text x="833" y="407">Sheet:</text><text x="847" y="407">1 of 1</text>
            <text x="833" y="412">Size:</text><text x="847" y="412">A3</text>
            <text x="794" y="417">Part material:</text><text x="823" y="417">100-01-021</text>
            <text x="794" y="423">Part number:</text><text x="821" y="423">100-01-021</text>
            <text x="794" y="430">Drawing no.:</text><text x="820" y="430">100-01-021</text>
            <text x="794" y="436">Date:</text>
            <text x="796" y="442">2022-12-21</text>
            <text x="833" y="436">Revision:</text>
            <text x="834" y="442">REV A</text>
          </g>
          <path d="M734.500 417.500h13v13h-13zM750.500 415h6.500v6.500h-6.500z" fill="#088008"/>
          <path d="M741 417.500h6.500v6.500H741z" fill="#10f020"/>
          <text class="brand" x="751" y="430">EPOPA</text>
          <text class="slogan" x="735" y="436">Engineering and Drafting Services</text>
          <path class="rough" d="M849 395l3.500 5 6-11.500"/>
          <path class="rough dark" d="M667 437v-3.500h-7.500v12h4v-4h2M662 436.500h4M662 440h3"/>
          <circle cx="668.500" cy="441" r="3.800" fill="#fff" stroke="#444" stroke-width="1.200" stroke-dasharray="2 1"/>
          <circle cx="668.500" cy="441" r="1.500" fill="#fff" stroke="#444" stroke-width=".8"/>
        </svg>
        <div class="scrollbar vertical">
          <button aria-label="Scroll up"><svg><use href="#chev-up"/></svg></button>
          <div class="track"><div class="thumb"></div></div>
          <button aria-label="Scroll down"><svg><use href="#chev-down"/></svg></button>
        </div>
      </div>
      <div class="scrollbar horizontal">
        <button aria-label="Scroll left"><svg><use href="#chev-left"/></svg></button>
        <div class="track"><div class="thumb"></div></div>
        <button aria-label="Scroll right"><svg class="flip"><use href="#chev-left"/></svg></button>
      </div>
      <div class="doc-tabs">
        <div class="doc-tab">
          <svg class="icon"><use href="#logo"/></svg><a href="#">Start page</a>
          <button aria-label="Close Start page"><svg><use href="#close"/></svg></button>
        </div>
        <div class="doc-tab">
          <svg class="icon"><use href="#logo"/></svg><a href="#">Ex21_21_12_2022 : 1*</a>
          <button aria-label="Close Ex21_21_12_2022"><svg><use href="#close"/></svg></button>
        </div>
        <div class="doc-tab active">
          <svg class="icon"><use href="#page"/></svg><a href="#">Page*</a>
          <button aria-label="Close Page"><svg><use href="#close"/></svg></button>
        </div>
      </div>
    </main>
  </div>

  <footer class="statusbar">
    <p>Valid (but must be executed), Internal name: Symbol001</p>
    <button class="nav-style"><svg class="icon"><use href="#mouse"/></svg>TinkerCAD<svg class="arrow"><use href="#arrow"/></svg></button>
    <span class="size">133.33 mm x 100.00 mm</span>
  </footer>

  <script src="script.js"></script>
</body>
</html>
```
FILE: styles.css
```css
* {
  box-sizing: border-box;
}

body {
  margin: 0;
  height: 100vh;
  display: flex;
  flex-direction: column;
  overflow: hidden;
  background: #f0f0f0;
  color: #111;
  font-family: Roboto, "Liberation Sans", sans-serif;
  font-size: 6px;
  line-height: 10px;
}

h1, h2, p, ul {
  margin: 0;
  padding: 0;
  font-size: inherit;
  font-weight: normal;
}

ul {
  list-style: none;
}

a {
  color: inherit;
  text-decoration: none;
}

button, select {
  margin: 0;
  padding: 0;
  border: 0;
  background: none;
  color: inherit;
  font: inherit;
}

svg {
  display: block;
}

.sprite {
  display: none;
}

.icon {
  width: 9px;
  height: 9px;
  flex: none;
}

/* Title bar and menu */
.titlebar {
  display: flex;
  align-items: center;
  flex: none;
  height: 12px;
  padding-left: 1px;
  gap: 2px;
  background: #4b4947;
  color: #f4f4f4;
}

.window-buttons {
  display: flex;
  margin-left: auto;
  padding-right: 2px;
}

.window-buttons button {
  display: grid;
  place-items: center;
  width: 23px;
  height: 11px;
}

.window-buttons svg {
  width: 6px;
  height: 6px;
}

.menubar {
  display: flex;
  flex: none;
  align-items: center;
  height: 10px;
  padding-left: 3px;
  gap: 8px;
  background: #fff;
}

/* Toolbars */
.toolbars {
  flex: none;
  border-bottom: 1px solid #8c8c8c;
}

.toolbar {
  display: flex;
  align-items: center;
  height: 13px;
  border-bottom: 1px solid #d5d5d5;
}

.toolbar:last-child {
  border-bottom: 0;
}

.tool {
  display: flex;
  align-items: center;
  justify-content: center;
  flex: 23 1 0;
  min-width: 0;
  height: 12px;
}

.tool .icon {
  width: 9px;
  height: 9px;
}

.tool.menu {
  flex-grow: 34;
  justify-content: space-evenly;
}

.tool.on {
  background: #bfdff5;
}

.arrow {
  width: 4px;
  height: 4px;
}

.handle {
  flex: 11 1 0;
  min-width: 0;
  height: 9px;
  background: linear-gradient(90deg, #c2c2c2, #c2c2c2) center / 1px 9px no-repeat;
}

/* The 6px basis is the padding and border, so it grows in step with the tools */
.workbench {
  display: flex;
  align-items: center;
  flex: 142 1 6px;
  min-width: 0;
  height: 11px;
  padding: 0 2px;
  border: 1px solid #b4b4b4;
  background: #e6e6e6;
}

.workbench select {
  flex: 1;
  appearance: none;
  padding-left: 1px;
}

.chevron {
  width: 6px;
  height: 6px;
}

/* Layout */
.workspace {
  flex: 1;
  min-height: 0;
  display: grid;
  grid-template-columns: 1fr 3fr;
}

.dock {
  display: flex;
  flex-direction: column;
  min-width: 0;
  min-height: 0;
  padding: 0 4px 0 1px;
}

.dock-title {
  display: flex;
  align-items: center;
  height: 10px;
  padding: 0 2px;
  background: #dadada;
}

.dock-title h2 {
  flex: 1;
}

.dock-title button {
  display: grid;
  place-items: center;
  width: 10px;
}

.dock-title svg {
  width: 5px;
  height: 5px;
}

.tabs {
  display: flex;
  height: 11px;
}

.tab {
  padding: 0 5px;
}

.tab.active {
  background: #fff;
}

.tabs.bottom {
  margin: 2px 0;
  background: #fff;
}

.tabs.bottom .tab:not(.active) {
  background: #f0f0f0;
}

/* Model tree */
.tree {
  flex: 1;
  min-height: 0;
  overflow: hidden;
  border: 1px solid #a8a8a8;
  background: #fff;
}

.tree-header {
  display: grid;
  grid-template-columns: 101px 50px;
  height: 10px;
}

.tree-header span {
  padding-left: 1px;
  border-right: 1px solid #e8e8e8;
}

.tree-header span + span {
  padding-left: 2px;
}

.tree-root {
  padding-left: 1px;
}

.tree li ul {
  padding-left: 10px;
}

.row {
  display: flex;
  align-items: center;
  height: 10px;
}

.row .toggle {
  display: grid;
  place-items: center;
  width: 8px;
}

.row .toggle svg {
  width: 6px;
  height: 6px;
}

.row .label {
  display: flex;
  align-items: center;
  gap: 2px;
  height: 10px;
  padding-left: 3px;
}

.row.strong {
  font-weight: bold;
}

.row.gray {
  color: #888;
}

.row.active .label {
  flex: 0 0 82px;
  background: #e4e4fb;
}

.row.current .label {
  flex: 0 0 72px;
  border: 1px solid #999;
  padding-left: 2px;
}

.properties {
  flex: 0 0 85px;
  margin: 3px 1px 0;
  border: 1px solid #a8a8a8;
  background: #fff;
}

.properties table {
  border-collapse: collapse;
}

.properties th {
  width: 50px;
  height: 14px;
  padding: 0 2px;
  border-right: 1px solid #e8e8e8;
  font-weight: normal;
  text-align: left;
}

.properties th:last-child {
  border: 0;
}

/* Drawing area */
.mdi {
  display: flex;
  flex-direction: column;
  min-width: 0;
  min-height: 0;
  border-left: 2px solid #b5b5b5;
}

.viewport {
  display: flex;
  flex: 1;
  min-height: 0;
  background: #d2d2d2;
}

.drawing {
  flex: 1;
  min-width: 0;
  height: 100%;
}

.paper {
  fill: #fff;
  stroke: #555;
}

.frame, .frame-outer, .zone, .edge, .thin, .center, .hidden-edge, .iso-hidden, .ext, .dim, .block, .rough {
  fill: none;
  stroke: #444;
  stroke-width: .8px;
}

.frame {
  stroke: #444;
  stroke-width: 1px;
}

.frame-outer, .zone {
  stroke: #888;
}

.edge {
  stroke: #333;
}

.thin {
  stroke: #555;
}

.hidden-edge {
  stroke: #666;
  stroke-dasharray: 2 1;
}

.iso-hidden {
  stroke: #999;
  stroke-dasharray: 2 1;
}

.center {
  stroke: #666;
  stroke-dasharray: 5 2 1 2;
  stroke-width: .7px;
}

.ext {
  stroke: #888;
  stroke-width: .6px;
}

.dim {
  stroke: #888;
  stroke-width: .7px;
}

.dim.both, .dim.start {
  marker-start: url(#tip);
}

.dim.both, .dim.end {
  marker-end: url(#tip);
}

.value {
  font-size: 7px;
  text-anchor: middle;
}

.zone-name {
  font-size: 4px;
  text-anchor: middle;
}

.caption {
  font-family: "DejaVu Sans Mono", monospace;
  font-size: 6px;
  font-weight: bold;
  fill: #111;
  text-anchor: middle;
}

.block {
  stroke: #333;
}

.note {
  font-size: 4px;
}

.brand {
  font-family: "Open Sans", sans-serif;
  font-size: 10px;
  fill: #178017;
}

.slogan {
  font-family: "DejaVu Sans", sans-serif;
  font-size: 3px;
  fill: #3f9f3f;
}

.rough {
  stroke: #777;
}

.rough.dark {
  stroke: #333;
}

.scrollbar {
  display: flex;
  flex: none;
  background: #f0f0f0;
}

.scrollbar button {
  display: grid;
  place-items: center;
  flex: none;
  width: 9px;
  height: 9px;
}

.scrollbar svg {
  width: 5px;
  height: 5px;
}

.scrollbar .flip {
  transform: rotate(180deg);
}

.scrollbar .track {
  display: flex;
  flex: 1;
}

.thumb {
  background: #cdcdcd;
}

.vertical {
  flex-direction: column;
  width: 9px;
}

.vertical .track {
  flex-direction: column;
  padding-top: 134px;
}

.vertical .thumb {
  height: 53%;
}

.horizontal {
  height: 9px;
  padding-right: 8px;
  border-bottom: 1px solid #777;
}

.horizontal .track {
  justify-content: center;
  padding-right: 4px;
}

.horizontal .thumb {
  width: 42%;
}

.doc-tabs {
  display: flex;
  height: 12px;
  gap: 5px;
}

.doc-tab {
  display: flex;
  align-items: center;
  gap: 1px;
  padding: 0 3px;
}

.doc-tab.active {
  background: #fff;
}

.doc-tab button {
  display: grid;
  place-items: center;
  width: 7px;
  height: 7px;
  background: #aaa;
  color: #fff;
}

.doc-tab button svg {
  width: 4px;
  height: 4px;
}

.doc-tab.active button {
  background: #e0553a;
}

/* Status bar */
.statusbar {
  display: flex;
  align-items: center;
  flex: none;
  height: 15px;
  padding: 0 2px 0 1px;
  font-family: "Open Sans", sans-serif;
  font-size: 5px;
}

.statusbar p {
  flex: 1;
}

.nav-style {
  display: flex;
  align-items: center;
  gap: 2px;
  padding: 0 4px;
  border-left: 1px solid #ddd;
}

.size {
  padding-left: 2px;
  border-left: 1px solid #ddd;
}
```
FILE: script.js
```js
// A number is a space, '|' a toolbar handle, a trailing 'v' adds a drop-down arrow, '*' marks a pressed tool
const toolbars = {
  'toolbar-file': ['|', 'new', 'open', 'save', 'saveas', 5, 'cut', 'copy', 'paste', 5, 'undo v', 'redo v', 9, 'nodes v', 8,
    'sync', 5, 'whats', 2, '|', 'workbench', '|', 'record', 'stop', 'macro', 'play', 1298],
  'toolbar-view': ['|', 'fit', 'zoomgray', 'style v', 'box *', 7, 'left', 'right', 'link v', 8, 'zoom v*', 'iso', 5,
    'cube', 'cube2', 'cube', 6, 'cube', 'cube2', 'cube', 4, 'measure', '|', 'part', 'folder', 'export', 'export v', 1364],
  'toolbar-techdraw': ['|', 'insert', 'clip', 'solid', 10, 'pagenew', 'orange', 'redraw', '|',
    'view', 'camera', 'draft', 'section', 'group', 'sheetblue', 'move', 'share', 'truck', 'detail', 'view', 2, '|',
    'pagenew', 'share', 'graydot', '|',
    'd-len', 'd-h', 'd-v', 'd-rad', 'd-dia', 'd-ang', 'd-ang', 'd-ext v', 'd-link', 'd-bal', 'd-axo', 2, '|',
    'c-cap', 'c-edit', 'c-hor v', 'c-mix', 'c-pair', 'c-step v', 2, 'c-hatch v', 'c-rect', 'c-brush', '|',
    'x-cross v', 1, 'x-thread v', 2, 'x-star', 'x-circ v', 'x-par v', 3, '|',
    'x-chain v', 2, 'x-coord v', 'x-chamf v', 1, 'x-arc', 'x-pos v', 2, 'x-inc v', 3, '|',
    's-rec', 's-rec', '|', 's-stair', 's-map', 's-sym', 's-img', 's-no', '|',
    'annot', 'a-poly', 'a-rich', 'a-cent v', 'a-line v', 2, 'a-seg', 'a-weld', 'a-pen', 'a-eye', 'a-can', 47]
};

function icon(name, className) {
  return `<svg class="${className || 'icon'}"><use href="#${name}"/></svg>`;
}

function tool(item) {
  if (typeof item === 'number') return `<span style="flex: ${item} 1 0"></span>`;
  if (item === '|') return '<span class="handle"></span>';
  if (item === 'workbench') return document.getElementById('workbench').innerHTML;
  const [name, flags = ''] = item.split(' ');
  const menu = flags.includes('v');
  const on = flags.includes('*');
  return `<button class="tool${menu ? ' menu' : ''}${on ? ' on' : ''}" aria-label="${name}">` +
    icon(name) + (menu ? icon('arrow', 'arrow') : '') + '</button>';
}

for (const id in toolbars) {
  document.getElementById(id).innerHTML = toolbars[id].map(tool).join('');
}

// [label, icon, row class, toggle, children]
const dims = (type, ...names) => names.map(n => ['Dimension' + n, type]);
const tree = [
  ['Ex21_21_12_2022', 'doc', 'strong', 'down', [
    ['Ex21', 'body', 'strong active', 'down', [
      ['Origin', 'origin', 'gray', 'right'],
      ['Pad', 'pad', 'gray', 'right'],
      ['Pocket', 'pocket', 'gray', 'right'],
      ['Pad001', 'padtip', 'current', 'right']
    ]],
    ['Page', 'page', '', 'down', [
      ['Template', 'template'],
      ['ProjGroup', 'group', '', 'down', [
        ['Front', 'projview', '', 'down', [
          ...dims('d-h', '', '001', '002', '003'),
          ...dims('d-v', '004', '005', '006')
        ]],
        ['Top', 'projview', '', 'down', [
          ...dims('d-h', '007', '008'),
          ...dims('d-v', '009'),
          ...dims('d-dia', '011', '012')
        ]],
        ['Right', 'projview', '', 'down', dims('d-v', '010')],
        ['FrontTopRight', 'projview']
      ]],
      ['Annotation', 'annot'],
      ['Symbol', 'symbol'],
      ['Symbol001', 'symtip']
    ]]
  ]]
];

function branch([label, iconName, rowClass = '', toggle, children]) {
  return `<li><div class="row ${rowClass}"><span class="toggle">${toggle ? icon('chev-' + toggle, 'chevron') : ''}</span>` +
    `<span class="label">${icon(iconName)}${label}</span></div>` +
    (children ? `<ul>${children.map(branch).join('')}</ul>` : '') + '</li>';
}

document.getElementById('tree').innerHTML = tree.map(branch).join('');

// Zone marks round the drawing frame
let zones = '';
[375, 452, 528, 603, 679, 754, 830].forEach((x, i) => {
  zones += `<text class="zone-name" x="${x}" y="76">${i + 1}</text><text class="zone-name" x="${x}" y="453">${i + 1}</text>`;
});
[109, 186, 262, 337, 413].forEach((y, i) => {
  const letter = 'ABCDE'[i];
  zones += `<text class="zone-name" x="339" y="${y + 2}">${letter}</text><text class="zone-name" x="867" y="${y + 2}">${letter}</text>`;
});
[414.5, 490.5, 566, 641.5, 717.5, 792.5].forEach(x => {
  zones += `<path class="zone" d="M${x} 71.500V77M${x} 448.500v5"/>`;
});
[148.5, 224.5, 300, 375.5].forEach(y => {
  zones += `<path class="zone" d="M336.500 ${y}h5M864.500 ${y}h5"/>`;
});
document.getElementById('zones').innerHTML = zones;
```
